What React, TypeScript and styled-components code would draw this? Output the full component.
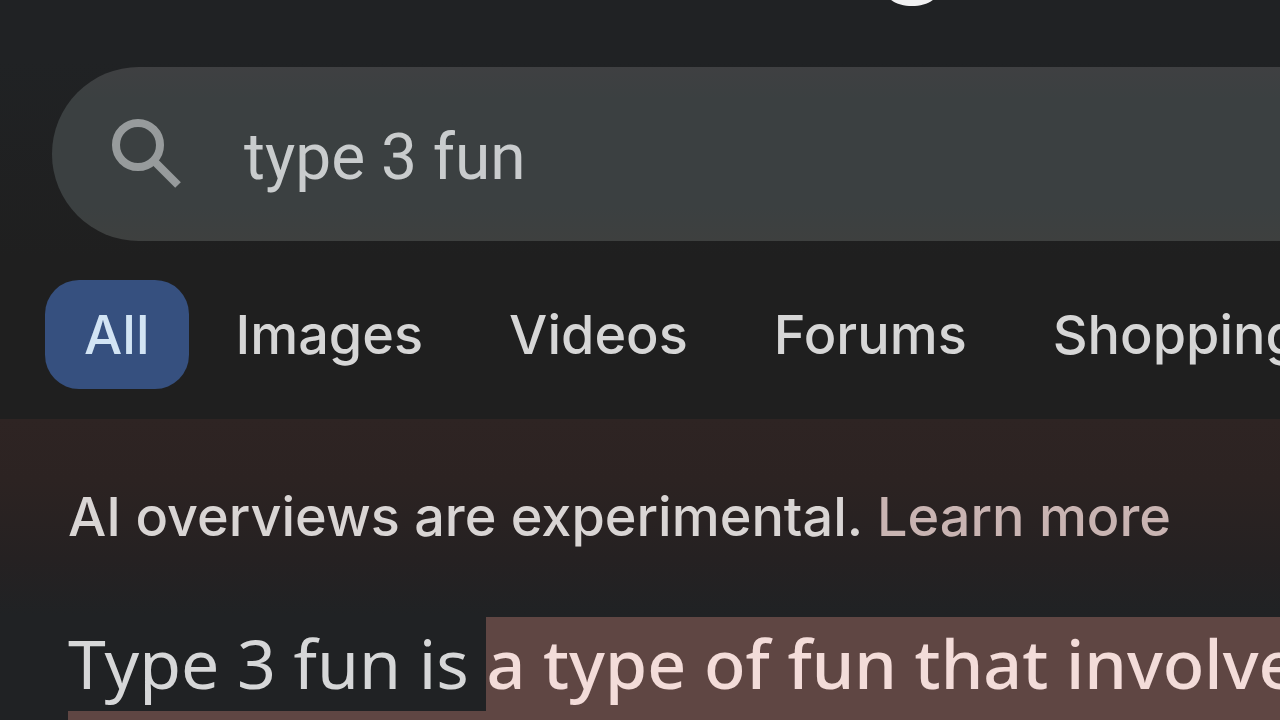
import React from "react";
import styled, { createGlobalStyle } from "styled-components";

const GlobalStyle = createGlobalStyle`
  *, *::before, *::after { box-sizing: border-box; }
  body {
    margin: 0;
    background: #1f2022;
    font-family: Inter, Roboto, sans-serif;
  }
`;

const Page = styled.div`
  display: flex;
  flex-direction: column;
  min-height: 100vh;
  max-height: 100vh;
  overflow: hidden;
  background: linear-gradient(#202224 0, #202224 60px, #1f1f1f 260px);
`;

const Header = styled.header`
  display: flex;
  flex: none;
  height: 67px;
  padding-left: 544px;
  justify-content: center;
`;

const SearchForm = styled.form`
  display: flex;
  flex: none;
  align-items: center;
  gap: 58px;
  height: 174px;
  margin-left: 52px;
  padding-left: 58px;
  border-radius: 87px 0 0 87px;
  background: linear-gradient(#3f4042 0, #3b4041 32px, #3b4041 140px, #3e403f 100%);
`;

const SearchIcon = styled.svg`
  flex: none;
  width: 76px;
  height: 76px;
  fill: none;
  stroke: #979b9c;
`;

const SearchInput = styled.input`
  flex: 1;
  min-width: 0;
  padding: 8px 0 0;
  border: 0;
  outline: 0;
  background: transparent;
  color: #c9cccd;
  font: 400 64px/80px Roboto, "Liberation Sans", sans-serif;
`;

const Tabs = styled.nav`
  display: flex;
  flex: none;
  gap: 8px;
  padding: 39px 0 30px 45px;
`;

const Tab = styled.a<{ $active?: boolean }>`
  flex: none;
  padding: 0 39px;
  border-radius: 34px;
  background: ${(p) => (p.$active ? "#36507f" : "transparent")};
  color: ${(p) => (p.$active ? "#d2e4f4" : "#d6d6d6")};
  font-size: 54px;
  font-weight: 500;
  line-height: 109px;
  text-decoration: none;
`;

const Overview = styled.section`
  flex: 1 0 auto;
  padding: 62px 0 0 68px;
  background: linear-gradient(#2e2423 0, #2c2322 60px, #252122 140px, #202224 196px);
`;

const Notice = styled.p`
  margin: 0 0 64px;
  color: #d9d5d4;
  font-size: 54px;
  font-weight: 500;
  line-height: 72px;
  white-space: nowrap;
`;

const LearnMore = styled.a`
  color: #c9b4b2;
  text-decoration: none;
`;

const Answer = styled.p`
  display: flex;
  margin: 0;
  color: #d6d7d8;
  font-family: "Noto Sans", sans-serif;
  font-size: 68px;
  line-height: 92px;
  white-space: pre;
`;

const Highlight = styled.mark`
  flex: 1 0 auto;
  padding-bottom: 2px;
  background: #5f4643;
  color: #f3dcd9;
  font-weight: 500;
`;

const NextLine = styled.div`
  height: 92px;
  background: #5f4643;
`;

const tabs = ["All", "Images", "Videos", "Forums", "Shopping"];

export default function App() {
  return (
    <Page>
      <GlobalStyle />
      <Header>
        <svg width="52" height="8" viewBox="0 0 52 8" aria-hidden="true">
          <path d="M0 -6C8 10 44 10 52 -6Z" fill="#f1f1f2" />
        </svg>
      </Header>
      <SearchForm role="search" onSubmit={(e) => e.preventDefault()}>
        <SearchIcon viewBox="0 0 76 76" aria-hidden="true">
          <circle cx="28" cy="29" r="22" strokeWidth="8" />
          <path d="M44 45L68 69" strokeWidth="8" />
        </SearchIcon>
        <SearchInput aria-label="Search" defaultValue="type 3 fun" />
      </SearchForm>
      <Tabs>
        {tabs.map((name) => (
          <Tab key={name} href="#" $active={name === "All"}>
            {name}
          </Tab>
        ))}
      </Tabs>
      <Overview>
        <Notice>
          AI overviews are experimental. <LearnMore href="#">Learn more</LearnMore>
        </Notice>
        <Answer>
          {"Type 3 fun is "}
          <Highlight>a type of fun that involves</Highlight>
        </Answer>
        <NextLine />
      </Overview>
    </Page>
  );
}
